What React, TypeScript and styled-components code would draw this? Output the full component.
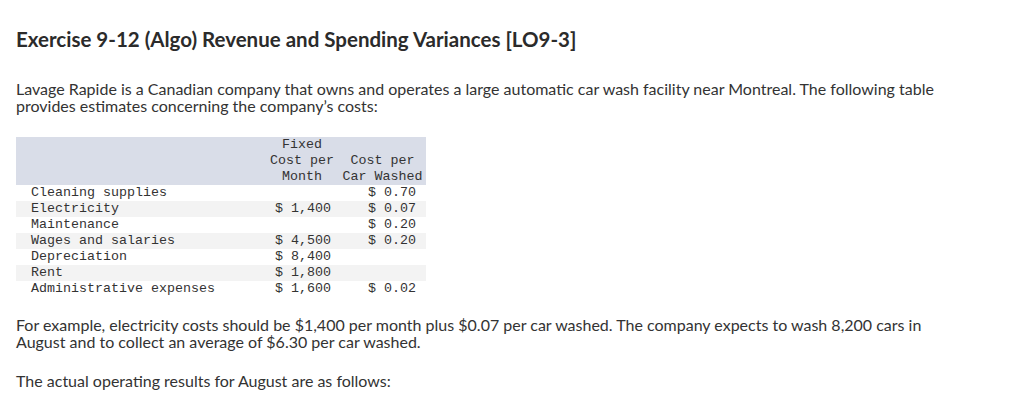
import React from "react";
import styled, { createGlobalStyle } from "styled-components";

const Global = createGlobalStyle`
  html, body { margin: 0; padding: 0; background: #fff; }
  body { font-family: Lato, "Open Sans", sans-serif; color: #333; }
`;

const Page = styled.div`
  padding: 26px 55px 0 16px;
`;

const Title = styled.h2`
  margin: 0 0 28px 0;
  font-size: 20.5px;
  line-height: 26px;
  font-weight: 700;
  color: #2b2b2b;
  white-space: nowrap;
`;

const Para = styled.p<{ $gap?: number }>`
  margin: 0 0 ${(p) => p.$gap ?? 18}px 0;
  font-size: 16px;
  line-height: 17px;
  color: #333;
`;

const Table = styled.table`
  border-collapse: collapse;
  font-family: "Liberation Mono", monospace;
  font-size: 13.33px;
  line-height: 16px;
  color: #333;
  margin: 0 0 19px 0;
`;

const HeadRow = styled.tr`
  background: #d9dde8;
`;

const HeadCell = styled.th<{ $w: number }>`
  width: ${(p) => p.$w}px;
  padding: 0;
  font-weight: 400;
  text-align: center;
  vertical-align: bottom;
  white-space: pre;
  line-height: 16px;
`;

const Row = styled.tr<{ $alt: boolean }>`
  background: ${(p) => (p.$alt ? "#f3f3f3" : "#fff")};
`;

const LabelCell = styled.td`
  padding: 0 0 0 15px;
  white-space: pre;
  height: 16px;
`;

const NumCell = styled.td<{ $pr: number }>`
  padding: 0 ${(p) => p.$pr}px 0 0;
  text-align: right;
  white-space: pre;
`;

const rows: [string, string, string][] = [
  ["Cleaning supplies", "", "$ 0.70"],
  ["Electricity", "$ 1,400", "$ 0.07"],
  ["Maintenance", "", "$ 0.20"],
  ["Wages and salaries", "$ 4,500", "$ 0.20"],
  ["Depreciation", "$ 8,400", ""],
  ["Rent", "$ 1,800", ""],
  ["Administrative expenses", "$ 1,600", "$ 0.02"],
];

export default function App() {
  return (
    <>
      <Global />
      <Page>
        <Title>Exercise 9-12 (Algo) Revenue and Spending Variances [LO9-3]</Title>
        <Para $gap={23}>
          Lavage Rapide is a Canadian company that owns and operates a large automatic car wash facility near Montreal. The following table provides estimates concerning the company’s costs:
        </Para>
        <Table>
          <thead>
            <HeadRow>
              <HeadCell $w={249}></HeadCell>
              <HeadCell $w={74}>{"Fixed\nCost per\nMonth"}</HeadCell>
              <HeadCell $w={87}>{"\nCost per\nCar Washed"}</HeadCell>
            </HeadRow>
          </thead>
          <tbody>
            {rows.map((r, i) => (
              <Row key={r[0]} $alt={i % 2 === 1}>
                <LabelCell>{r[0]}</LabelCell>
                <NumCell $pr={8}>{r[1]}</NumCell>
                <NumCell $pr={10}>{r[2]}</NumCell>
              </Row>
            ))}
          </tbody>
        </Table>
        <Para $gap={22}>
          For example, electricity costs should be $1,400 per month plus $0.07 per car washed. The company expects to wash 8,200 cars in August and to collect an average of $6.30 per car washed.
        </Para>
        <Para>The actual operating results for August are as follows:</Para>
      </Page>
    </>
  );
}
